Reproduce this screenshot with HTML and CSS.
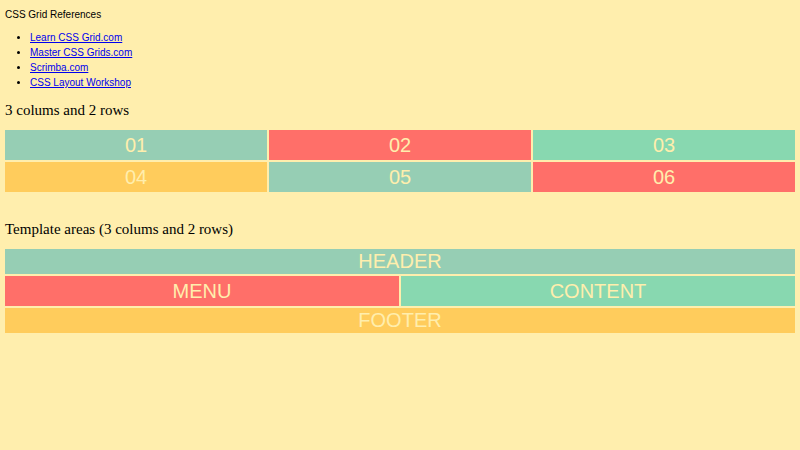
FILE: index.html
```html
<!DOCTYPE html>
<html>
<head>
<meta charset="utf-8">
<link rel="stylesheet" href="styles.css">
</head>
<body>
<div class="refs-title">CSS Grid References</div>
<ul class="refs">
  <li><a href="#">Learn CSS Grid.com</a></li>
  <li><a href="#">Master CSS Grids.com</a></li>
  <li><a href="#">Scrimba.com</a></li>
  <li><a href="#">CSS Layout Workshop</a></li>
</ul>
<h2 class="section-title first">3 colums and 2 rows</h2>
<div class="grid-basic">
  <div class="cell teal">01</div>
  <div class="cell red">02</div>
  <div class="cell green">03</div>
  <div class="cell yellow">04</div>
  <div class="cell teal">05</div>
  <div class="cell red">06</div>
</div>
<h2 class="section-title second">Template areas (3 colums and 2 rows)</h2>
<div class="grid-areas">
  <div class="cell teal area-header">HEADER</div>
  <div class="cell red area-menu">MENU</div>
  <div class="cell green area-content">CONTENT</div>
  <div class="cell yellow area-footer">FOOTER</div>
</div>
</body>
</html>
```
FILE: styles.css
```css
html, body {
  background: #ffeead;
}
body {
  margin: 0;
  padding: 5px;
  font-family: "Liberation Sans", Arial, sans-serif;
  color: #000;
}
.refs-title {
  font-size: 10px;
  line-height: 13px;
  margin-top: 3px;
}
.refs {
  margin: 9px 0 0;
  padding-left: 25px;
  font-size: 10px;
  line-height: 15px;
}
.refs a {
  color: #0000ee;
}
.section-title {
  font-family: "Liberation Serif", "Times New Roman", serif;
  font-weight: normal;
  font-size: 15px;
  line-height: 18px;
  margin: 0;
}
.section-title.first {
  margin-top: 11px;
}
.section-title.second {
  margin-top: 28px;
}
.grid-basic {
  margin-top: 11px;
  display: grid;
  grid-template-columns: 1fr 1fr 1fr;
  grid-template-rows: 30px 30px;
  gap: 2px;
}
.grid-areas {
  margin-top: 11px;
  display: grid;
  grid-template-columns: 1fr 1fr;
  grid-template-rows: 25px 30px 25px;
  gap: 2px;
  grid-template-areas:
    "header header"
    "menu content"
    "footer footer";
}
.cell {
  display: flex;
  align-items: center;
  justify-content: center;
  font-size: 20px;
  color: #ffeead;
}
.teal { background: #96ceb4; }
.red { background: #ff6f69; }
.green { background: #88d8b0; }
.yellow { background: #ffcc5c; }
.area-header { grid-area: header; }
.area-menu { grid-area: menu; }
.area-content { grid-area: content; }
.area-footer { grid-area: footer; }
```
